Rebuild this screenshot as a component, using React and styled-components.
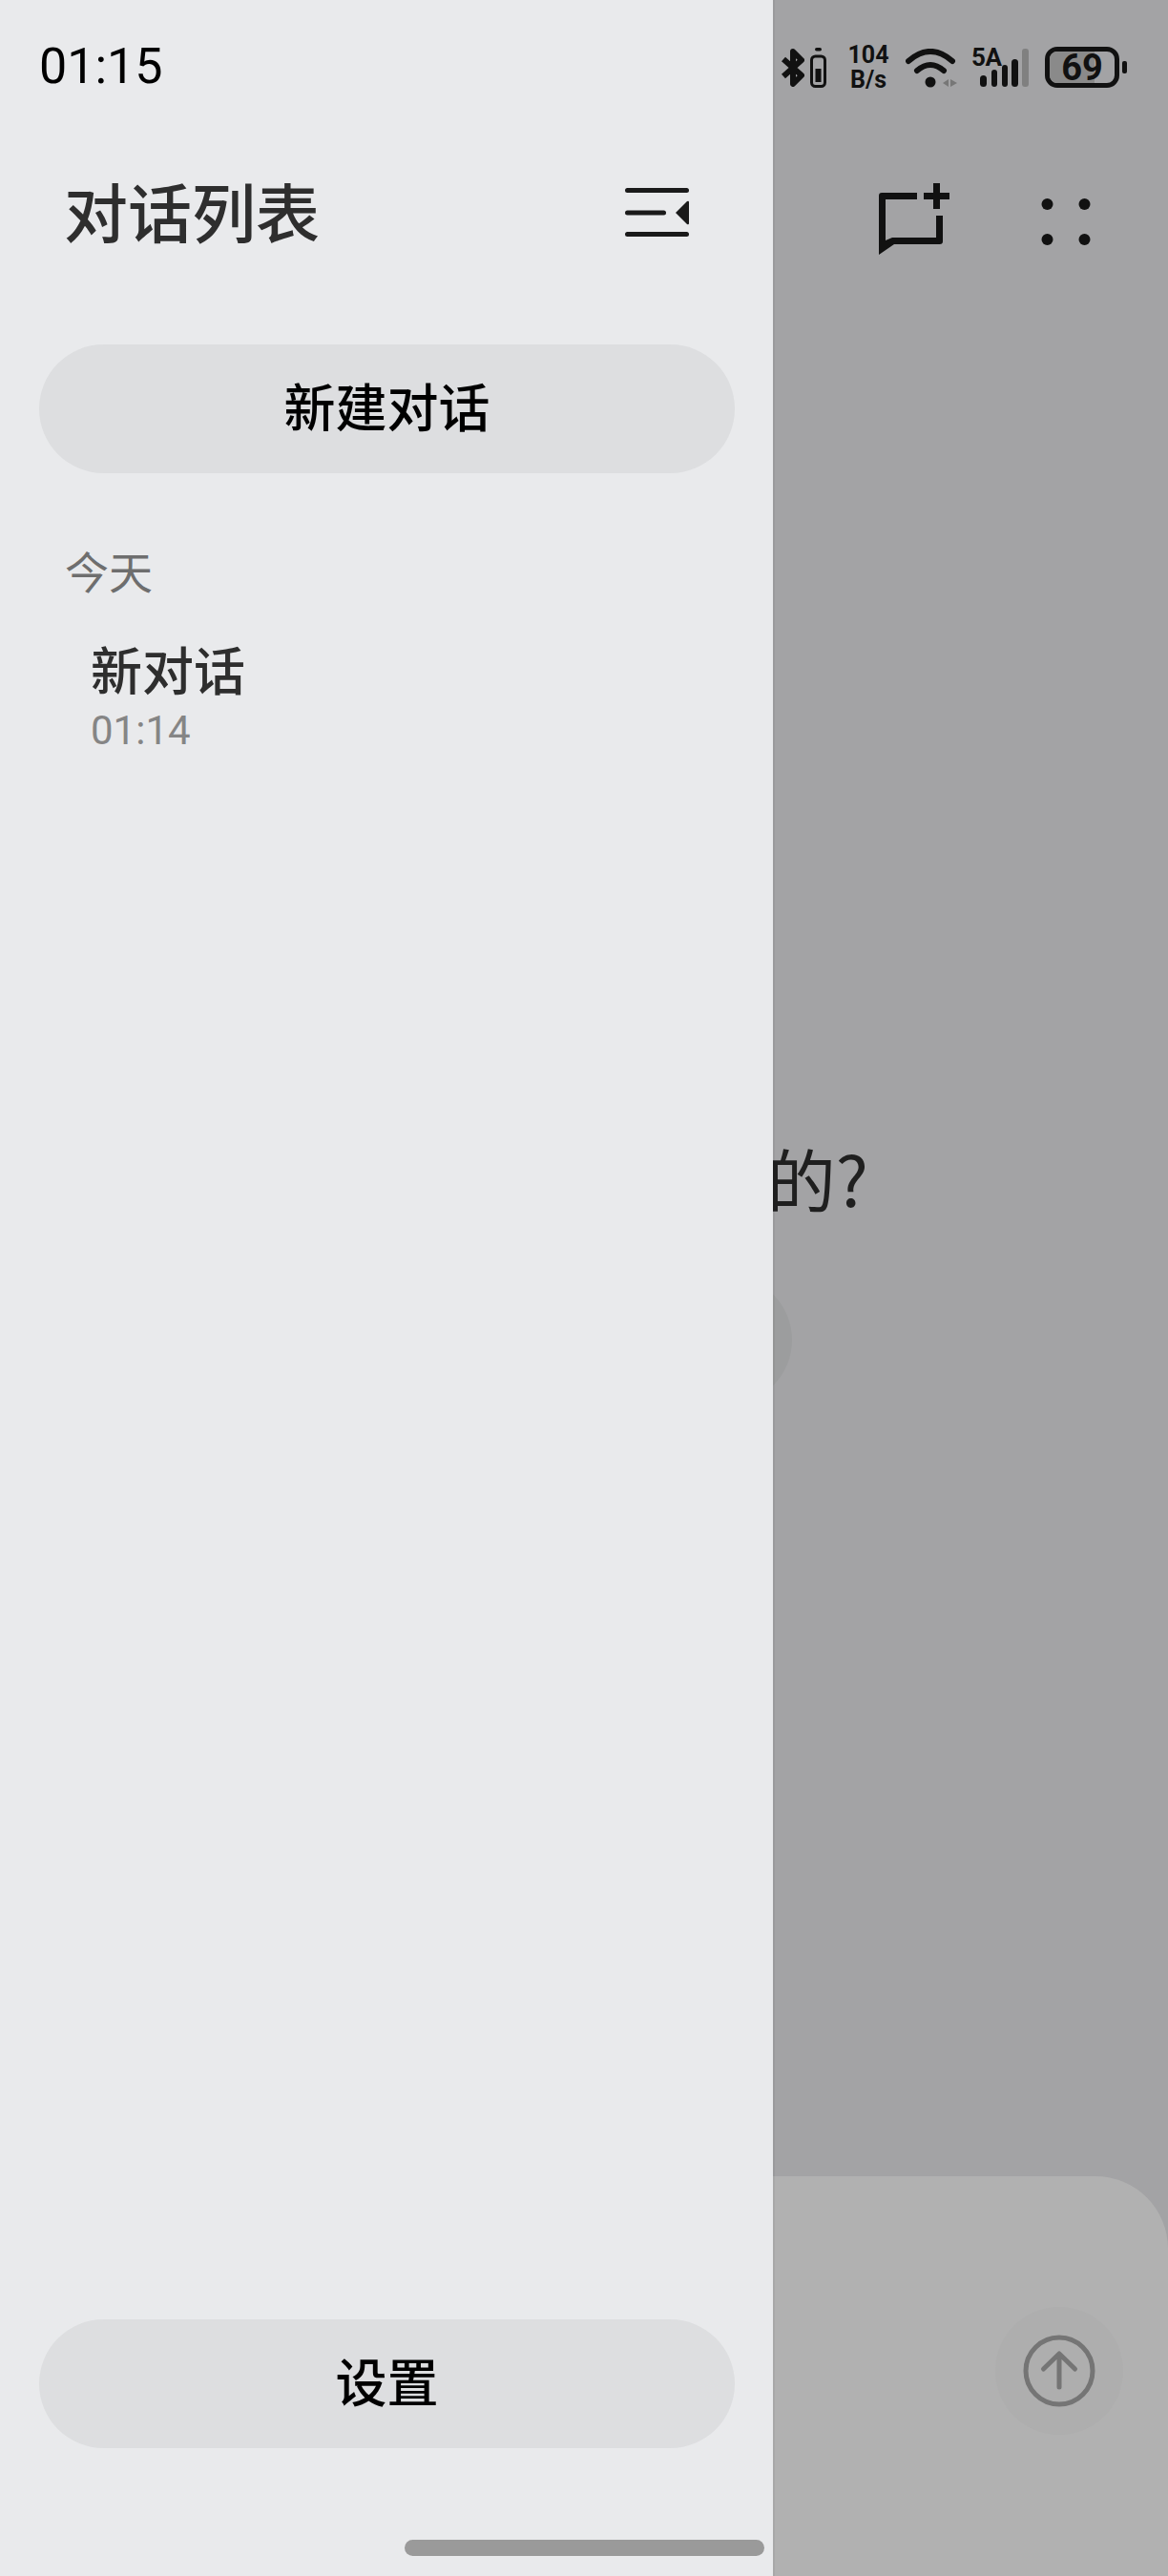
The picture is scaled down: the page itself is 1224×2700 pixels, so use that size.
import styled, { createGlobalStyle } from "styled-components";

const GlobalStyle = createGlobalStyle`
  html, body {
    margin: 0;
    padding: 0;
    background: #a3a3a5;
  }
  * {
    box-sizing: border-box;
  }
`;

const cjk = `"Noto Sans CJK SC", "Noto Sans", sans-serif`;

const Screen = styled.div`
  position: relative;
  width: 1224px;
  height: 2700px;
  overflow: hidden;
  font-family: ${cjk};
`;

/* page behind the drawer */
const Main = styled.main`
  display: flex;
  flex-direction: column;
  height: 100%;
  background: #a3a3a5;
`;

const StatusIcons = styled.div`
  display: flex;
  align-items: flex-start;
  height: 48px;
  margin-top: 48px;
  padding-left: 818px;
`;

const Speed = styled.div`
  display: flex;
  flex-direction: column;
  align-items: center;
  width: 46px;
  margin-left: 21px;
  margin-top: -3px;
  color: #111;
  font-family: "Roboto", sans-serif;
  font-size: 25px;
  font-weight: 700;
  line-height: 26px;
`;

const Signal = styled.div`
  position: relative;
  width: 59px;
  height: 43px;
  margin-left: 14px;
  margin-top: 3px;
`;

const SignalLabel = styled.span`
  position: absolute;
  left: -1px;
  top: -3px;
  color: #111;
  font-family: "Roboto", sans-serif;
  font-size: 26px;
  font-weight: 700;
  line-height: 25px;
  letter-spacing: -0.5px;
`;

const Battery = styled.div`
  position: relative;
  width: 78px;
  height: 43px;
  margin-left: 17px;
  margin-top: 1px;
  border: 5px solid #111;
  border-radius: 13px;
  overflow: hidden;
`;

const BatteryFill = styled.div`
  height: 100%;
  background: #8a8a8a;
`;

const BatteryLevel = styled.span`
  position: absolute;
  inset: 0;
  display: flex;
  align-items: center;
  justify-content: center;
  color: #111;
  font-family: "Roboto", sans-serif;
  font-size: 38px;
  font-weight: 700;
  line-height: 1;
`;

const BatteryNub = styled.div`
  width: 5px;
  height: 13px;
  margin-left: 3px;
  margin-top: 16px;
  border-radius: 2px;
  background: #111;
`;

const TopActions = styled.div`
  display: flex;
  align-items: flex-start;
  margin-top: 96px;
  padding-left: 921px;
  gap: 95px;
`;

const Hero = styled.section`
  display: flex;
  flex-direction: column;
  align-items: flex-end;
  margin-top: 914px;
`;

const Question = styled.h2`
  margin: 0 314px 0 0;
  color: #1f1f1f;
  font-size: 72px;
  font-weight: 400;
  line-height: 104px;
`;

const Suggestion = styled.div`
  width: 400px;
  height: 135px;
  margin-top: 51px;
  margin-right: 394px;
  border-radius: 68px;
  background: #9c9d9e;
`;

const InputPanel = styled.div`
  display: flex;
  justify-content: flex-end;
  margin-top: auto;
  height: 419px;
  padding: 137px 47px 0 0;
  border-top-right-radius: 76px;
  background: #b1b1b1;
`;

const SendButton = styled.div`
  display: flex;
  align-items: center;
  justify-content: center;
  width: 134px;
  height: 134px;
  border-radius: 50%;
  background: #aeaeae;
`;

/* drawer */
const Drawer = styled.aside`
  position: absolute;
  left: 0;
  top: 0;
  display: flex;
  flex-direction: column;
  width: 810px;
  height: 100%;
  padding: 0 40px 134px 41px;
  background: #e9eaec;
  box-shadow: 2px 0 0 rgba(0, 0, 0, 0.05);
`;

const Clock = styled.div`
  margin-top: 40px;
  color: #000;
  font-family: "Roboto", sans-serif;
  font-size: 52px;
  font-weight: 450;
  line-height: 60px;
`;

const DrawerHeader = styled.header`
  display: flex;
  align-items: center;
  justify-content: space-between;
  margin-top: 72px;
  padding: 0 48px 0 26px;
`;

const Title = styled.h1`
  margin: 0;
  color: #2e2e2e;
  font-size: 67px;
  font-weight: 500;
  line-height: 96px;
`;

const PillButton = styled.button`
  flex: none;
  width: 729px;
  height: 135px;
  padding: 0 0 8px;
  border: 0;
  border-radius: 68px;
  background: #dddee0;
  color: #000;
  font-family: ${cjk};
  font-size: 54px;
  font-weight: 500;
  line-height: 1;
`;

const NewChat = styled(PillButton)`
  margin-top: 93px;
`;

const SectionLabel = styled.div`
  margin-top: 68px;
  padding-left: 27px;
  color: #6e6e6e;
  font-size: 46px;
  line-height: 66px;
`;

const Conversation = styled.div`
  display: flex;
  flex-direction: column;
  margin-top: 35px;
  padding-left: 54px;
`;

const ConversationName = styled.div`
  color: #2e2e2e;
  font-size: 54px;
  font-weight: 500;
  line-height: 72px;
`;

const ConversationTime = styled.div`
  margin-top: 4px;
  color: #858585;
  font-family: "Roboto", sans-serif;
  font-size: 42px;
  font-weight: 400;
  line-height: 50px;
`;

const Settings = styled(PillButton)`
  margin-top: auto;
`;

const HomeBar = styled.div`
  position: absolute;
  left: 424px;
  bottom: 21px;
  width: 377px;
  height: 17px;
  border-radius: 9px;
  background: #9a9a9a;
`;

const BluetoothIcon = () => (
  <svg width="25" height="40" viewBox="0 0 25 40" style={{ marginTop: 3 }}>
    <path
      d="M3 11 L22 28 L13 37 V3 L22 12 L3 29"
      fill="none"
      stroke="#111"
      strokeWidth="6"
      strokeLinejoin="round"
    />
  </svg>
);

const MiniBattery = () => (
  <svg width="17" height="42" viewBox="0 0 17 42" style={{ marginLeft: 6, marginTop: 2 }}>
    <rect x="5" y="0" width="7" height="3.5" rx="1.75" fill="#111" />
    <rect x="1.5" y="9" width="14" height="31.5" rx="4" fill="none" stroke="#111" strokeWidth="3" />
    <rect x="5.5" y="22" width="6" height="14" fill="#111" />
  </svg>
);

const WifiIcon = () => (
  <svg width="56" height="42" viewBox="0 0 56 42" style={{ marginLeft: 16, marginTop: 3 }}>
    <path d="M3 13 Q26 -7 49 13" fill="none" stroke="#111" strokeWidth="6" strokeLinecap="round" />
    <path d="M12 23 Q26 11 40 23" fill="none" stroke="#111" strokeWidth="6" strokeLinecap="round" />
    <circle cx="26" cy="35" r="5.5" fill="#111" />
    <path d="M45 32 V40 L39 36 Z M47 32 L54 36 L47 40 Z" fill="#777" />
  </svg>
);

const SignalBars = () => (
  <svg width="59" height="43" viewBox="0 0 59 43">
    <rect x="8" y="28" width="7" height="12" rx="3.5" fill="#111" />
    <rect x="20" y="22" width="6" height="18" rx="3" fill="#111" />
    <rect x="31" y="17" width="6" height="23" rx="3" fill="#111" />
    <rect x="41" y="11" width="7" height="29" rx="3.5" fill="#111" />
    <rect x="52" y="0" width="7" height="40" rx="3" fill="#808080" />
  </svg>
);

const NewChatIcon = () => (
  <svg width="75" height="76" viewBox="921 192 75 76">
    <path
      d="M924 202 H961 V209 H928 V252 L935 249 H981 V226 H988 V253 Q988 256 985 256 H937 L921 267 V205 Q921 202 924 202 Z"
      fill="#111"
    />
    <path d="M978 192 H985 V202 H995 V209 H985 V219 H978 V209 H968 V202 H978 Z" fill="#111" />
  </svg>
);

const DotsIcon = () => (
  <svg width="52" height="50" viewBox="1091 208 51 50" style={{ marginTop: 16 }}>
    <circle cx="1097" cy="214" r="6" fill="#111" />
    <circle cx="1136" cy="214" r="6" fill="#111" />
    <circle cx="1097" cy="251" r="6" fill="#111" />
    <circle cx="1136" cy="251" r="6" fill="#111" />
  </svg>
);

const SendIcon = () => (
  <svg width="76" height="76" viewBox="0 0 76 76">
    <circle cx="38" cy="38" r="35" fill="none" stroke="#757575" strokeWidth="5" />
    <path
      d="M38 55 V21 M21.5 36 L38 20 L54.5 36"
      fill="none"
      stroke="#757575"
      strokeWidth="5"
      strokeLinecap="round"
      strokeLinejoin="round"
    />
  </svg>
);

const CollapseIcon = () => (
  <svg width="67" height="52" viewBox="0 0 67 52" style={{ marginTop: 6 }}>
    <rect x="0" y="0" width="67" height="5" rx="2.5" fill="#1a1a1a" />
    <rect x="0" y="23.5" width="43" height="5" rx="2.5" fill="#1a1a1a" />
    <rect x="0" y="46" width="67" height="5" rx="2.5" fill="#1a1a1a" />
    <path d="M53 26 L65 14 Q67 13 67 15 V37 Q67 39 65 38 Z" fill="#1a1a1a" />
  </svg>
);

export default function App() {
  return (
    <Screen>
      <GlobalStyle />
      <Main>
        <StatusIcons>
          <BluetoothIcon />
          <MiniBattery />
          <Speed>
            <span>104</span>
            <span>B/s</span>
          </Speed>
          <WifiIcon />
          <Signal>
            <SignalBars />
            <SignalLabel>5A</SignalLabel>
          </Signal>
          <Battery>
            <BatteryFill style={{ width: "69%" }} />
            <BatteryLevel>69</BatteryLevel>
          </Battery>
          <BatteryNub />
        </StatusIcons>
        <TopActions>
          <NewChatIcon />
          <DotsIcon />
        </TopActions>
        <Hero>
          <Question>的?</Question>
          <Suggestion />
        </Hero>
        <InputPanel>
          <SendButton>
            <SendIcon />
          </SendButton>
        </InputPanel>
      </Main>
      <Drawer>
        <Clock>01:15</Clock>
        <DrawerHeader>
          <Title>对话列表</Title>
          <CollapseIcon />
        </DrawerHeader>
        <NewChat>新建对话</NewChat>
        <SectionLabel>今天</SectionLabel>
        <Conversation>
          <ConversationName>新对话</ConversationName>
          <ConversationTime>01:14</ConversationTime>
        </Conversation>
        <Settings>设置</Settings>
      </Drawer>
      <HomeBar />
    </Screen>
  );
}
